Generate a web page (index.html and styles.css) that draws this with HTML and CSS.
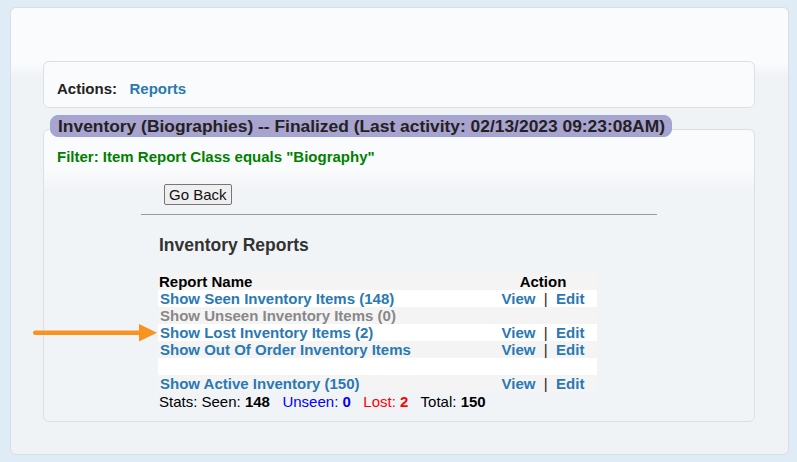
FILE: index.html
```html
<!DOCTYPE html>
<html lang="en">
<head>
    <meta charset="UTF-8">
    <title>Inventory (Biographies)</title>
    <link rel="stylesheet" href="styles.css">
</head>
<body>
    <div class="page">
        <div class="actions-box">
            <span class="actions-label">Actions:</span>&nbsp;&nbsp;
            <a class="link" href="#">Reports</a>
        </div>

        <div class="title-wrap">
            <h3 class="inventory-title">Inventory (Biographies) -- Finalized (Last activity: 02/13/2023 09:23:08AM)</h3>
        </div>

        <div class="content-box">
            <svg class="pointer-arrow" width="126" height="18" viewBox="0 0 126 18">
                <rect x="1" y="6.5" width="110" height="4.5" rx="2.2" fill="#f7931e"/>
                <polygon points="107,0 125,8.7 107,17.5" fill="#f7931e"/>
            </svg>

            <div class="filter">Filter: Item Report Class equals "Biography"</div>

            <div class="reports">
                <button class="btn-back" type="button">Go Back</button>
                <hr class="divider">

                <div class="reports-body">
                    <h3 class="reports-title">Inventory Reports</h3>

                    <table class="report-table">
                        <tr class="row-head">
                            <th class="col-name">Report Name</th>
                            <th class="col-action">Action</th>
                        </tr>
                        <tr class="row-odd">
                            <td><a class="link" href="#">Show Seen Inventory Items (148)</a></td>
                            <td class="col-action"><a class="link" href="#">View</a>&nbsp; | &nbsp;<a class="link" href="#">Edit</a></td>
                        </tr>
                        <tr class="row-even">
                            <td><span class="link-off">Show Unseen Inventory Items (0)</span></td>
                            <td class="col-action"></td>
                        </tr>
                        <tr class="row-odd">
                            <td><a class="link" href="#">Show Lost Inventory Items (2)</a></td>
                            <td class="col-action"><a class="link" href="#">View</a>&nbsp; | &nbsp;<a class="link" href="#">Edit</a></td>
                        </tr>
                        <tr class="row-even">
                            <td><a class="link" href="#">Show Out Of Order Inventory Items</a></td>
                            <td class="col-action"><a class="link" href="#">View</a>&nbsp; | &nbsp;<a class="link" href="#">Edit</a></td>
                        </tr>
                        <tr class="row-odd">
                            <td>&nbsp;</td>
                            <td class="col-action"></td>
                        </tr>
                        <tr class="row-even">
                            <td><a class="link" href="#">Show Active Inventory (150)</a></td>
                            <td class="col-action"><a class="link" href="#">View</a>&nbsp; | &nbsp;<a class="link" href="#">Edit</a></td>
                        </tr>
                    </table>

                    <div class="stats">
                        Stats: Seen: <b>148</b>&nbsp;&nbsp;
                        <span class="stat-unseen">Unseen: <b>0</b></span>&nbsp;&nbsp;
                        <span class="stat-lost">Lost: <b>2</b></span>&nbsp;&nbsp;
                        Total: <b>150</b>
                    </div>
                </div>
            </div>
        </div>
    </div>
</body>
</html>
```

FILE: styles.css
```css
* {
    box-sizing: border-box;
}

body {
    margin: 0;
    background: #dfecf5;
    font-family: "Liberation Sans", Arial, sans-serif;
    font-size: 15px;
    line-height: 17px;
    color: #222;
}

.page {
    margin: 7px 8px 7px 10px;
    height: 448px;
    padding: 53px 33px 0 32px;
    border: 1px solid #d6dee6;
    border-radius: 6px;
    background: linear-gradient(to bottom, #fafbfc 0, #fafbfc 55px, #f0f3f6 68px, #f0f3f6 100%);
}

.actions-box {
    height: 47px;
    padding: 18px 13px 0;
    border: 1px solid #dcdfe3;
    border-radius: 6px;
    background: #fafbfc;
}

.actions-label {
    font-weight: bold;
}

.link {
    color: #2a79b3;
    font-weight: bold;
    text-decoration: none;
}

.link-off {
    color: #888;
    font-weight: bold;
}

.title-wrap {
    position: relative;
    z-index: 1;
    margin: 7px 0 -8px 7px;
}

.inventory-title {
    display: inline-block;
    margin: 0;
    height: 22px;
    padding: 0 6px 0 7px;
    font-size: 17.4px;
    line-height: 20px;
    font-weight: bold;
    color: #222;
    background: #a8a3cf;
    border: 1px solid #97a6dc;
    border-radius: 8px;
}

.content-box {
    position: relative;
    height: 293px;
    padding: 18px 13px 0;
    border: 1px solid #dcdfe3;
    border-radius: 6px;
    background: linear-gradient(to bottom, #fafbfc 0, #fafbfc 38px, #f1f4f7 60px, #f1f4f7 100%);
}

.pointer-arrow {
    position: absolute;
    left: -12px;
    top: 194px;
}

.filter {
    color: #008000;
    font-weight: bold;
}

.reports {
    width: 516px;
    margin: 19px auto 0;
}

.btn-back {
    margin-left: 23px;
    height: 21px;
    padding: 0 4px;
    font-family: "Liberation Sans", Arial, sans-serif;
    font-size: 15px;
    line-height: 17px;
    color: #111;
    background: #efefef;
    border: 1px solid #767676;
    border-radius: 2px;
}

.divider {
    margin: 9px 0 0;
    border: 0;
    border-top: 1px solid #9a9a9a;
}

.reports-body {
    padding-left: 17px;
}

.reports-title {
    margin: 20px 0 18px 1px;
    font-size: 17.5px;
    line-height: 20px;
    color: #333;
}

.report-table {
    width: 439px;
    border-collapse: collapse;
}

.report-table th,
.report-table td {
    height: 17px;
    padding: 0 2px;
    text-align: left;
    white-space: nowrap;
}

.report-table th {
    color: #000;
    font-weight: bold;
}

.report-table .col-name {
    padding-left: 1px;
}

.report-table .col-action {
    width: 108px;
    text-align: center;
}

.row-head,
.row-even {
    background: #f4f4f4;
}

.row-odd {
    background: #fff;
}

.stats {
    margin: 1px 0 0 1px;
    color: #000;
}

.stat-unseen {
    color: #0000ff;
}

.stat-lost {
    color: #ff0000;
}
```
